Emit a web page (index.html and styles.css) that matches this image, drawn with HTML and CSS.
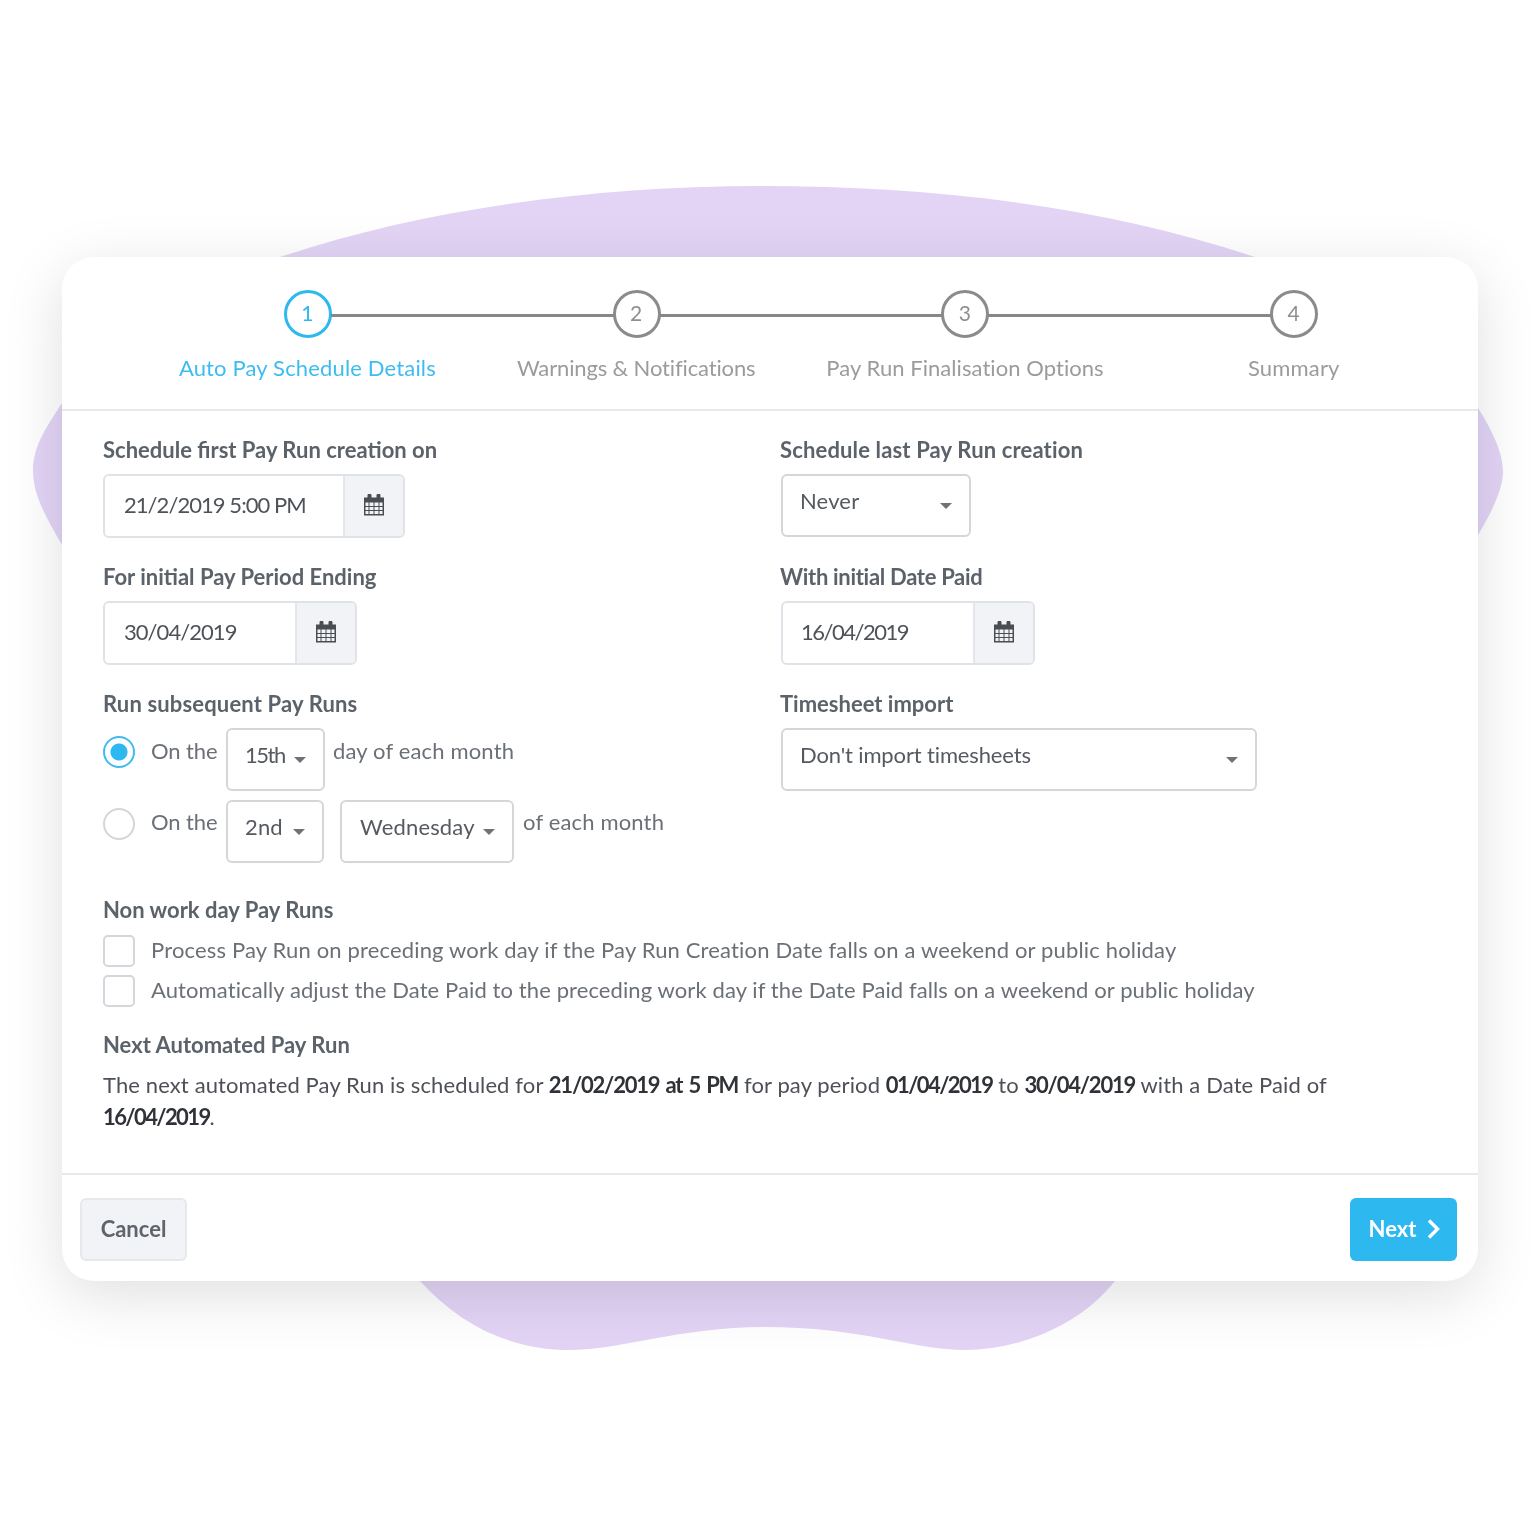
FILE: index.html
```
<!DOCTYPE html>
<html lang="en">
<head>
<meta charset="utf-8">
<title>Auto Pay Schedule</title>
<link rel="stylesheet" href="styles.css">
</head>
<body>
<div class="stage">
  <svg class="blob" width="1536" height="1536" viewBox="0 0 1536 1536" aria-hidden="true">
    <path fill="#e3d4f6" d="M760 186C930 186 1100 205 1255 257L1400 310L1478 408C1495 435 1503 455 1503 472C1503 490 1490 515 1478 535L1300 1100L1115 1281C1080 1325 1020 1350 965 1350C915 1350 860 1327 765 1327C680 1327 620 1350 570 1350C510 1350 460 1325 420 1281L100 800L62 545C45 515 33 495 33 470C33 445 48 425 62 403L150 300L280 257C420 210 590 186 760 186Z"/>
  </svg>
  <main class="card">
    <ol class="stepper">
      <li class="step step-active"><span class="step-num">1</span><span class="step-label">Auto Pay Schedule Details</span></li>
      <li class="step"><span class="step-num">2</span><span class="step-label step-label-tight">Warnings &amp; Notifications</span></li>
      <li class="step"><span class="step-num">3</span><span class="step-label step-label-fin">Pay Run Finalisation Options</span></li>
      <li class="step step-last"><span class="step-num">4</span><span class="step-label">Summary</span></li>
    </ol>
    <form class="form">
      <div class="grid">
        <div class="field">
          <div class="label">Schedule first Pay Run creation on</div>
          <div class="date date-wide">
            <span class="date-value">21/2/2019 5:00 PM</span>
            <span class="addon"><svg class="cal" viewBox="0 0 22 22"><use href="#cal"/></svg></span>
          </div>
        </div>
        <div class="field field-right">
          <div class="label label-wide">Schedule last Pay Run creation</div>
          <div class="select select-never"><span>Never</span><i class="caret"></i></div>
        </div>
        <div class="field">
          <div class="label">For initial Pay Period Ending</div>
          <div class="date">
            <span class="date-value">30/04/2019</span>
            <span class="addon"><svg class="cal" viewBox="0 0 22 22"><use href="#cal"/></svg></span>
          </div>
        </div>
        <div class="field field-right">
          <div class="label label-tight">With initial Date Paid</div>
          <div class="date">
            <span class="date-value date-value-ones">16/04/2019</span>
            <span class="addon"><svg class="cal" viewBox="0 0 22 22"><use href="#cal"/></svg></span>
          </div>
        </div>
        <div class="field">
          <div class="label label-wide">Run subsequent Pay Runs</div>
          <div class="radio-row">
            <span class="radio radio-on"></span>
            <span class="inline-text on-the">On the</span>
            <div class="select select-15"><span class="num-tight">15th</span><i class="caret"></i></div>
            <span class="inline-text after-15">day of each month</span>
          </div>
          <div class="radio-row">
            <span class="radio"></span>
            <span class="inline-text on-the">On the</span>
            <div class="select select-2"><span>2nd</span><i class="caret"></i></div>
            <div class="select select-wed"><span>Wednesday</span><i class="caret"></i></div>
            <span class="inline-text after-wed">of each month</span>
          </div>
        </div>
        <div class="field field-right">
          <div class="label">Timesheet import</div>
          <div class="select select-ts"><span class="ts-text">Don't import timesheets</span><i class="caret"></i></div>
        </div>
      </div>
      <section class="nonwork">
        <div class="label">Non work day Pay Runs</div>
        <div class="check-row"><span class="check"></span><span class="check-text">Process Pay Run on preceding work day if the Pay Run Creation Date falls on a weekend or public holiday</span></div>
        <div class="check-row"><span class="check"></span><span class="check-text check-text-tight">Automatically adjust the Date Paid to the preceding work day if the Date Paid falls on a weekend or public holiday</span></div>
      </section>
      <section class="next-run">
        <div class="label">Next Automated Pay Run</div>
        <p class="summary">The next automated Pay Run is scheduled for <b>21/02/2019 at 5 PM</b> for pay period <b class="ones">01/04/2019</b> to <b>30/04/2019</b> with a Date Paid of <b class="ones">16/04/2019</b>.</p>
      </section>
    </form>
    <footer class="footer">
      <button class="btn btn-cancel" type="button">Cancel</button>
      <button class="btn btn-next" type="button">Next<svg class="chev" width="14" height="22" viewBox="0 0 14 22"><path d="M3 2.5L11.5 11L3 19.5" fill="none" stroke="#fff" stroke-width="3.4"/></svg></button>
    </footer>
  </main>
</div>
<svg class="defs" width="0" height="0" aria-hidden="true">
  <symbol id="cal" viewBox="0 0 22 22">
    <path fill="#4a4d52" fill-rule="evenodd" d="M1 3.5H4.5V1.5a1.5 1.5 0 0 1 4 0V3.5H13.5V1.5a1.5 1.5 0 0 1 4 0V3.5H21V21.5H1ZM2.5 8.5V12H5.5V8.5ZM6.5 8.5V12H10.5V8.5ZM11.5 8.5V12H15.5V8.5ZM16.5 8.5V12H19.5V8.5ZM2.5 13V16H5.5V13ZM6.5 13V16H10.5V13ZM11.5 13V16H15.5V13ZM16.5 13V16H19.5V13ZM2.5 17V20H5.5V17ZM6.5 17V20H10.5V17ZM11.5 17V20H15.5V17ZM16.5 17V20H19.5V17Z"/>
  </symbol>
</svg>
</body>
</html>
```
FILE: styles.css
```
* { box-sizing: border-box; }
html, body { margin: 0; padding: 0; background: #fff; }
body { font-family: "Lato", "Liberation Sans", sans-serif; font-size: 22px; color: #5f646b; letter-spacing: 0.16px; }
.stage { position: relative; width: 1536px; height: 1536px; padding: 257px 58px 0 62px; overflow: hidden; }
.blob { position: absolute; left: 0; top: 0; }
.defs { position: absolute; }
.card { position: relative; height: 1024px; background: #fff; border-radius: 32px; box-shadow: 0 14px 60px rgba(0,0,0,.13); filter: blur(0.4px); }

.stepper { list-style: none; margin: 0; padding: 33px 21px 0 81.5px; height: 154px; display: grid; grid-template-columns: repeat(4, 328.8px); border-bottom: 2px solid #e7e9ed; }
.step { position: relative; display: flex; flex-direction: column; align-items: center; color: #9b9b9b; }
.step::after { content: ""; position: absolute; top: 24px; left: calc(50% + 23px); width: 283px; height: 3px; background: #878787; }
.step-last::after { display: none; }
.step-num { width: 48px; height: 48px; padding: 0 1px 3px 0; border: 3px solid #8b8b8b; border-radius: 50%; display: flex; align-items: center; justify-content: center; font-size: 21px; line-height: 1; color: #8f8f8f; background: #fff; margin-bottom: 16px; }
.step-label { line-height: 28px; white-space: nowrap; margin-left: -1px; }
.step-label-tight { letter-spacing: -0.14px; }
.step-label-fin { letter-spacing: 0.06px; }
.step-active { color: #3dbcf0; }
.step-active .step-num { border-color: #2db9f0; color: #2db9f0; }

.form { padding: 25px 0 40px 41px; border-bottom: 2px solid #e7e9ed; height: 764px; }
.grid { display: grid; grid-template-columns: 677px 1fr; row-gap: 25px; }
.label { font-weight: 700; line-height: 28px; letter-spacing: 0; color: #5c6269; margin-bottom: 10px; white-space: nowrap; }
.label-wide { letter-spacing: 0.15px; }
.label-tight { letter-spacing: -0.3px; }

.date { display: inline-flex; height: 64px; border: 2px solid #dfe3e8; border-radius: 6px; width: 254px; overflow: hidden; color: #4f5359; }
.date-wide { width: 302px; }
.date-value { flex: 1; padding-left: 19px; line-height: 57px; letter-spacing: -0.95px; white-space: nowrap; }
.date-value-ones { padding-left: 18px; letter-spacing: -1.5px; }
.addon { width: 60px; flex: none; padding-bottom: 2px; background: #f1f3f6; border-left: 2px solid #e3e6ea; display: flex; align-items: center; justify-content: center; }
.cal { width: 22px; height: 22px; }
.field-right .date, .field-right .select { margin-left: 1px; }

.select { display: flex; justify-content: space-between; height: 63px; padding: 11px 17px 0 17px; line-height: 28px; border: 2px solid #d6d6d6; border-radius: 6px; color: #555a60; background: #fff; white-space: nowrap; }
.caret { flex: none; width: 0; height: 0; margin-top: 16px; border: 6px solid transparent; border-bottom: 0; border-top-color: #6f7378; }
.select-never { width: 190px; }
.select-ts { width: 476px; }
.select-15 { width: 99px; }
.select-2 { width: 98px; }
.select-wed { width: 174px; margin-left: 16px; padding-left: 18px; }
.num-tight { letter-spacing: -1.5px; }
.ts-text { letter-spacing: -0.14px; }

.radio-row { display: flex; align-items: flex-start; margin-bottom: 9px; }
.radio { flex: none; width: 32px; height: 32px; margin-top: 8px; border: 2px solid #d3d5d8; border-radius: 50%; background: #fff; }
.radio-on { border-color: #3dbcf0; background: radial-gradient(circle, #2db9f0 0 8px, #fff 9px); }
.inline-text { line-height: 28px; padding-top: 9px; white-space: nowrap; color: #6b7077; }
.radio-row + .radio-row .inline-text { padding-top: 8px; }
.on-the { width: 75px; margin-left: 16px; letter-spacing: -0.1px; }
.after-15 { margin-left: 8px; }
.after-wed { margin-left: 9px; }

.nonwork { margin-top: 24px; }
.nonwork .label { margin-bottom: 11px; }
.check-row { display: flex; align-items: center; height: 32px; margin-bottom: 8px; }
.check { flex: none; width: 32px; height: 32px; border: 2px solid #d3d7db; border-radius: 5px; background: #fff; }
.check-text { margin-left: 16px; padding-bottom: 4px; white-space: nowrap; color: #6b7077; }
.check-text-tight { letter-spacing: 0.1px; }

.next-run { margin-top: 24px; }
.summary { margin: 0; width: 1240px; line-height: 32px; color: #4d5157; letter-spacing: 0.12px; }
.summary b { font-weight: 700; letter-spacing: -1.2px; word-spacing: 2px; color: #2f3338; }
.summary b.ones { letter-spacing: -1.6px; }

.footer { display: flex; justify-content: space-between; padding: 23px 21px 0 18px; }
.btn { height: 63px; width: 107px; border-radius: 6px; font: inherit; letter-spacing: 0; font-weight: 700; padding: 0 0 2px; display: flex; align-items: center; justify-content: center; }
.btn-cancel { background: #f1f3f6; border: 2px solid #e6e8ec; color: #5f646b; letter-spacing: 0; }
.btn-next { background: #2db9f0; border: 0; color: #fff; gap: 10px; padding-left: 2px; }
```
